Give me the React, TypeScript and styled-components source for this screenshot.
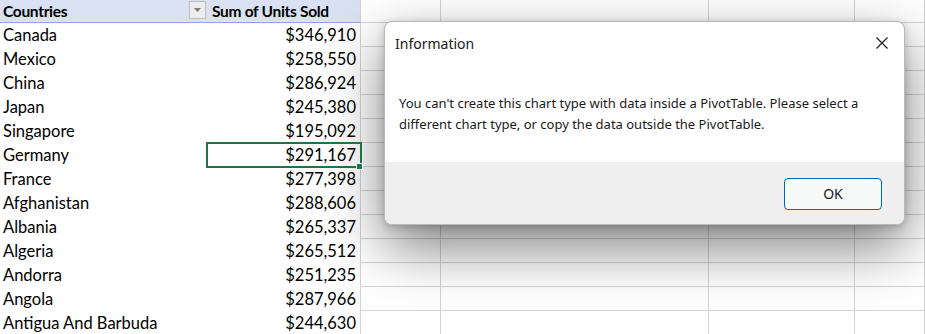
import React from "react";
import styled, { createGlobalStyle } from "styled-components";

const rows: [string, string][] = [
    ["Canada", "$346,910"],
    ["Mexico", "$258,550"],
    ["China", "$286,924"],
    ["Japan", "$245,380"],
    ["Singapore", "$195,092"],
    ["Germany", "$291,167"],
    ["France", "$277,398"],
    ["Afghanistan", "$288,606"],
    ["Albania", "$265,337"],
    ["Algeria", "$265,512"],
    ["Andorra", "$251,235"],
    ["Angola", "$287,966"],
    ["Antigua And Barbuda", "$244,630"],
];

const SELECTED = 5;
const EMPTY_COLS = 4;

export default function App() {
    return (
        <>
            <GlobalStyle />
            <Screen>
                <Sheet>
                    <HeadCell>
                        Countries
                        <FilterButton>
                            <svg width="7" height="4" viewBox="0 0 7 4">
                                <path d="M0 0h7L3.5 4z" fill="#7a7a7a" />
                            </svg>
                        </FilterButton>
                    </HeadCell>
                    <HeadCell $last>Sum of Units Sold</HeadCell>
                    {Array.from({ length: EMPTY_COLS }).map((_, i) => (
                        <GridCell key={`h${i}`} />
                    ))}
                    {rows.map(([country, value], r) => (
                        <React.Fragment key={country}>
                            <LabelCell>{country}</LabelCell>
                            <ValueCell $selected={r === SELECTED}>
                                {value}
                                {r === SELECTED && <FillHandle />}
                            </ValueCell>
                            {Array.from({ length: EMPTY_COLS }).map((_, i) => (
                                <GridCell key={i} />
                            ))}
                        </React.Fragment>
                    ))}
                </Sheet>

                <Dialog>
                    <DialogBody>
                        <TitleBar>
                            <Title>Information</Title>
                            <CloseButton>
                                <svg width="12" height="12" viewBox="0 0 12 12">
                                    <path d="M0.5 0.5l11 11M11.5 0.5l-11 11" stroke="#1a1a1a" strokeWidth="1.1" />
                                </svg>
                            </CloseButton>
                        </TitleBar>
                        <Message>
                            You can't create this chart type with data inside a PivotTable. Please select a
                            <br />
                            different chart type, or copy the data outside the PivotTable.
                        </Message>
                    </DialogBody>
                    <Footer>
                        <OkButton>OK</OkButton>
                    </Footer>
                </Dialog>
            </Screen>
        </>
    );
}

const GlobalStyle = createGlobalStyle`
    html, body {
        margin: 0;
        padding: 0;
        background: #ffffff;
        overflow: hidden;
    }
`;

const Screen = styled.div`
    position: relative;
    width: 925px;
    height: 334px;
    overflow: hidden;
    background: #ffffff;
`;

const Sheet = styled.div`
    display: grid;
    grid-template-columns: 207px 154px 80px 268px 146px 70px;
    grid-auto-rows: 24px;
    grid-template-rows: 23px;
    font-family: Lato, "Liberation Sans", sans-serif;
    font-size: 16.5px;
    color: #000000;
`;

const HeadCell = styled.div<{ $last?: boolean }>`
    position: relative;
    display: flex;
    align-items: center;
    padding-left: ${(p) => (p.$last ? "5px" : "3px")};
    padding-bottom: 1px;
    box-sizing: border-box;
    background: #d9e1f2;
    border-bottom: 1px solid #8ea9db;
    border-right: ${(p) => (p.$last ? "1px solid #d4d4d4" : "none")};
    font-size: 15.5px;
    font-weight: 700;
    letter-spacing: -0.3px;
    white-space: nowrap;
`;

const FilterButton = styled.div`
    position: absolute;
    right: 1px;
    top: 1px;
    width: 17px;
    height: 18px;
    box-sizing: border-box;
    border: 1px solid #bfbfbf;
    background: #ececec;
    display: flex;
    align-items: center;
    justify-content: center;
`;

const LabelCell = styled.div`
    display: flex;
    align-items: center;
    padding-left: 3px;
    white-space: nowrap;
`;

const ValueCell = styled.div<{ $selected?: boolean }>`
    position: relative;
    display: flex;
    align-items: center;
    justify-content: flex-end;
    padding-right: 4px;
    box-sizing: border-box;
    border-right: 1px solid #d4d4d4;
    outline: ${(p) => (p.$selected ? "2px solid #217346" : "none")};
    outline-offset: -1px;
    z-index: ${(p) => (p.$selected ? 1 : 0)};
`;

const FillHandle = styled.span`
    position: absolute;
    right: -3px;
    bottom: -3px;
    width: 5px;
    height: 5px;
    background: #217346;
    border: 1px solid #ffffff;
`;

const GridCell = styled.div`
    box-sizing: border-box;
    border-right: 1px solid #d4d4d4;
    border-bottom: 1px solid #d4d4d4;
`;

const Dialog = styled.div`
    position: absolute;
    left: 384px;
    top: 21px;
    width: 521px;
    height: 204px;
    display: flex;
    flex-direction: column;
    box-sizing: border-box;
    border: 1px solid #b9b9b9;
    border-radius: 8px;
    overflow: hidden;
    background: #ffffff;
    box-shadow: 0 22px 56px rgba(0, 0, 0, 0.5), 0 2px 8px rgba(0, 0, 0, 0.2);
    font-family: "Noto Sans", "Open Sans", sans-serif;
    color: #1a1a1a;
`;

const DialogBody = styled.div`
    flex: 1;
    display: flex;
    flex-direction: column;
`;

const TitleBar = styled.div`
    display: flex;
    align-items: center;
    justify-content: space-between;
    height: 38px;
    padding: 2px 16px 0 10px;
`;

const Title = styled.div`
    font-size: 14px;
`;

const CloseButton = styled.div`
    display: flex;
    align-items: center;
    justify-content: center;
`;

const Message = styled.div`
    padding: 31px 0 0 14px;
    font-size: 13px;
    line-height: 21px;
`;

const Footer = styled.div`
    height: 62px;
    display: flex;
    align-items: center;
    justify-content: flex-end;
    padding-right: 22px;
    background: #efefef;
`;

const OkButton = styled.button`
    width: 98px;
    height: 32px;
    margin-top: 1px;
    box-sizing: border-box;
    border: 1px solid #0067c0;
    border-radius: 4px;
    background: #f8f9f9;
    font-family: "Noto Sans", "Open Sans", sans-serif;
    font-size: 14px;
    color: #1a1a1a;
`;
